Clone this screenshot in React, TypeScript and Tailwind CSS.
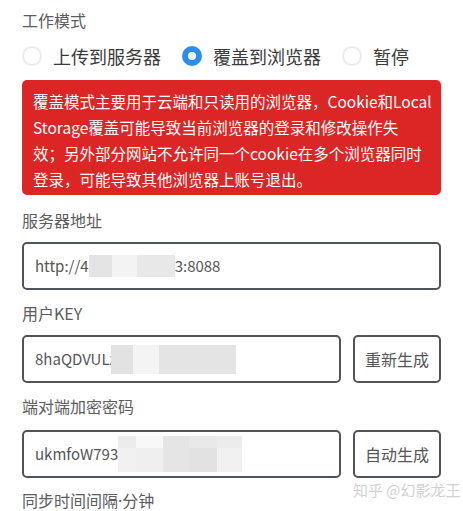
import React from "react";

const FONT = '"Noto Sans CJK SC", "Noto Sans", sans-serif';

function Radio({ checked }: { checked?: boolean }) {
  if (checked) {
    return (
      <span className="box-border inline-block h-[20px] w-[20px] shrink-0 rounded-full border-[6px] border-[#2a8ef0] bg-white" />
    );
  }
  return (
    <span className="box-border inline-block h-[20px] w-[20px] shrink-0 rounded-full border-2 border-[#ebebeb] bg-white" />
  );
}

function Label({ children, className = "" }: { children: React.ReactNode; className?: string }) {
  return <div className={`text-[16px] leading-[22px] text-[#5c5c5c] ${className}`}>{children}</div>;
}

function Field({ children, className = "" }: { children: React.ReactNode; className?: string }) {
  return (
    <div
      className={`box-border flex h-[48px] items-center overflow-hidden whitespace-nowrap rounded-[5px] border-2 border-[#50545a] bg-white pl-[11px] text-[15px] text-[#555] ${className}`}
    >
      {children}
    </div>
  );
}

function Button({ children }: { children: React.ReactNode }) {
  return (
    <div className="box-border flex h-[48px] w-[88px] shrink-0 items-center justify-center rounded-[5px] border-2 border-[#50545a] bg-white text-[16px] text-[#555]">
      {children}
    </div>
  );
}

export default function App() {
  return (
    <div
      className="relative h-[511px] w-[463px] overflow-hidden bg-white px-[22px] pt-[9px]"
      style={{ fontFamily: FONT }}
    >
      <Label>工作模式</Label>

      <div className="mt-[11px] flex h-[28px] items-center text-[18px] leading-[28px] text-[#3a3a3a]">
        <Radio />
        <span className="ml-[11px]">上传到服务器</span>
        <span className="ml-[21px] flex items-center">
          <Radio checked />
        </span>
        <span className="ml-[11px]">覆盖到浏览器</span>
        <span className="ml-[21px] flex items-center">
          <Radio />
        </span>
        <span className="ml-[11px]">暂停</span>
      </div>

      <div className="mt-[10px] rounded-[5px] bg-[#dc2626] pb-[3px] pl-[11px] pr-[4px] pt-[8px] text-[15.5px] leading-[26px] text-white">
        <div className="whitespace-nowrap">覆盖模式主要用于云端和只读用的浏览器，Cookie和Local</div>
        <div className="whitespace-nowrap">Storage覆盖可能导致当前浏览器的登录和修改操作失</div>
        <div className="whitespace-nowrap">效；另外部分网站不允许同一个cookie在多个浏览器同时</div>
        <div className="whitespace-nowrap">登录，可能导致其他浏览器上账号退出。</div>
      </div>

      <Label className="mt-[14px]">服务器地址</Label>
      <Field className="mt-[11px]">
        <span>http://4</span>
        <span className="inline-flex h-[22px]">
          <span className="w-[23px] bg-[#e4e4e4]" />
          <span className="w-[25px] bg-[#f3f3f3]" />
          <span className="w-[38px] bg-[#e8e8e8]" />
        </span>
        <span>3:8088</span>
      </Field>

      <Label className="mt-[12px]">用户KEY</Label>
      <div className="mt-[11px] flex gap-[12px]">
        <Field className="flex-1">
          <span>8haQDVULz</span>
          <span className="inline-flex h-[29px] -ml-[6px]">
            <span className="w-[22px] bg-[#e2e2e2]" />
            <span className="w-[26px] bg-[#f4f4f4]" />
            <span className="w-[77px] bg-[#e4e4e4]" />
          </span>
        </Field>
        <Button>重新生成</Button>
      </div>

      <Label className="mt-[12px]">端对端加密密码</Label>
      <div className="mt-[13px] flex gap-[12px]">
        <Field className="flex-1">
          <span>ukmfoW793</span>
          <span className="inline-flex h-[36px]">
            <span className="flex w-[18px] flex-col">
              <span className="h-[12px] bg-[#ececec]" />
              <span className="flex-1 bg-[#f1f1f1]" />
            </span>
            <span className="flex w-[27px] flex-col">
              <span className="h-[12px] bg-[#f8f8f8]" />
              <span className="flex-1 bg-[#efefef]" />
            </span>
            <span className="w-[26px] bg-[#e5e5e5]" />
            <span className="flex w-[28px] flex-col">
              <span className="h-[12px] bg-[#e9e9e9]" />
              <span className="flex-1 bg-[#e2e2e2]" />
            </span>
            <span className="flex w-[25px] flex-col">
              <span className="h-[12px] bg-[#ececec]" />
              <span className="flex-1 bg-[#f1f1f1]" />
            </span>
          </span>
        </Field>
        <Button>自动生成</Button>
      </div>

      <Label className="mt-[11px]">
        同步时间间隔<span style={{ fontFamily: '"Noto Sans", sans-serif' }}>·</span>分钟
      </Label>

      <div
        className="absolute left-[353px] top-[480px] whitespace-nowrap text-[15px] leading-[20px] text-[#d2d2d2]"
        style={{ textShadow: "0 0 2px #fff" }}
      >
        知乎 @幻影龙王
      </div>
    </div>
  );
}
